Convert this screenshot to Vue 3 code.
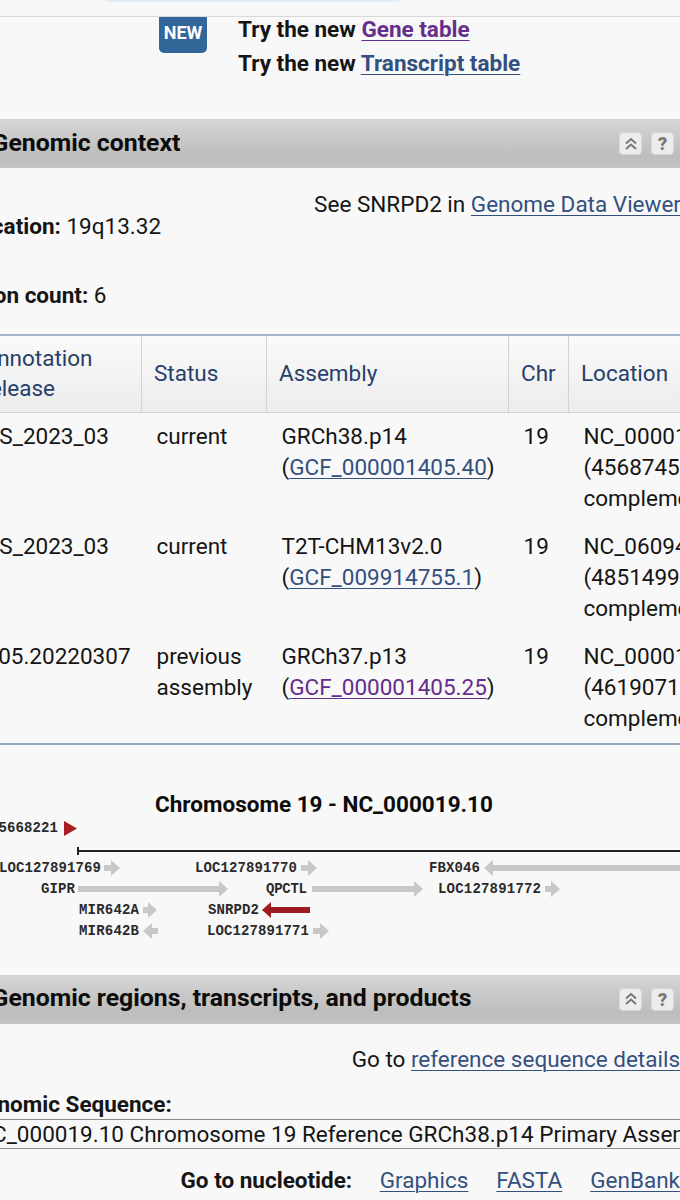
<script setup>
const rows = [
  { rel: 'RS_2023_03', status: ['current'], asm: 'GRCh38.p14', gcf: 'GCF_000001405.40', seen: false, loc: 'NC_000019.10', range: '(45687454..45692150,' },
  { rel: 'RS_2023_03', status: ['current'], asm: 'T2T-CHM13v2.0', gcf: 'GCF_009914755.1', seen: false, loc: 'NC_060943.1', range: '(48514999..48519700,' },
  { rel: '105.20220307', status: ['previous', 'assembly'], asm: 'GRCh37.p13', gcf: 'GCF_000001405.25', seen: true, loc: 'NC_000019.9', range: '(46190712..46195400,' }
]

// page coordinates minus the top of the map (y - 815)
const labels = [
  { t: '45668221', x: -10, w: 68, y: 13 },
  { t: 'LOC127891769', x: -1, w: 102, y: 53 },
  { t: 'LOC127891770', x: 195, w: 102, y: 53 },
  { t: 'FBX046', x: 429, w: 51, y: 53 },
  { t: 'GIPR', x: 41, w: 34, y: 74 },
  { t: 'QPCTL', x: 266, w: 41, y: 74 },
  { t: 'LOC127891772', x: 438, w: 103, y: 74 },
  { t: 'MIR642A', x: 79, w: 60, y: 95 },
  { t: 'SNRPD2', x: 208, w: 51, y: 95 },
  { t: 'MIR642B', x: 79, w: 60, y: 116 },
  { t: 'LOC127891771', x: 207, w: 102, y: 116 }
]

const arrows = [
  { from: 104, to: 120, y: 53 },
  { from: 301, to: 317, y: 53 },
  { from: 680, to: 484, y: 53 },
  { from: 78, to: 228, y: 74 },
  { from: 312, to: 423, y: 74 },
  { from: 545, to: 560, y: 74 },
  { from: 143, to: 157, y: 95 },
  { from: 310, to: 262, y: 95, red: true },
  { from: 158, to: 143, y: 116 },
  { from: 313, to: 329, y: 116 }
]

function arrowPath(a) {
  const dir = a.to > a.from ? 1 : -1
  const neck = a.to - dir * 9
  return `M${a.from} ${a.y - 3}H${neck}V${a.y - 8}L${a.to} ${a.y}L${neck} ${a.y + 8}V${a.y + 3}H${a.from}Z`
}
</script>

<template>
  <div class="page">
    <div class="searchEdge"></div>
    <div class="topRule"></div>

    <div class="notice">
      <div class="newBadge">NEW</div>
      <div class="noticeText">
        <p>Try the new <a class="seen" href="#">Gene table</a></p>
        <p>Try the new <a href="#">Transcript table</a></p>
      </div>
    </div>

    <div class="band">
      <h2>Genomic context</h2>
      <div class="bandBtns">
        <span class="bandBtn">
          <svg width="14" height="14" viewBox="0 0 14 14"><path d="M2 6.5L7 2L12 6.5M2 12L7 7.5L12 12" fill="none" stroke="#777" stroke-width="2"/></svg>
        </span>
        <span class="bandBtn qmark">?</span>
      </div>
    </div>

    <div class="contextInfo">
      <p class="seeAlso">See SNRPD2 in <a href="#">Genome Data Viewer</a></p>
      <p class="loc"><b>Location:</b> 19q13.32</p>
      <p class="exons"><b>Exon count:</b> 6</p>
    </div>

    <table class="asmTable">
      <colgroup>
        <col style="width: 171px" />
        <col style="width: 125px" />
        <col style="width: 242px" />
        <col style="width: 60px" />
        <col style="width: 112px" />
      </colgroup>
      <thead>
        <tr>
          <th>Annotation<br />release</th>
          <th>Status</th>
          <th>Assembly</th>
          <th>Chr</th>
          <th>Location</th>
        </tr>
      </thead>
      <tbody>
        <tr v-for="r in rows" :key="r.gcf">
          <td>{{ r.rel }}</td>
          <td><div v-for="s in r.status" :key="s">{{ s }}</div></td>
          <td>
            <div>{{ r.asm }}</div>
            <div>(<a :class="{ seen: r.seen }" href="#">{{ r.gcf }}</a>)</div>
          </td>
          <td>19</td>
          <td>
            <div>{{ r.loc }}</div>
            <div>{{ r.range }}</div>
            <div>complement)</div>
          </td>
        </tr>
      </tbody>
    </table>

    <h3 class="mapTitle">Chromosome 19 - NC_000019.10</h3>

    <svg class="map" width="680" height="128" viewBox="0 0 680 128">
      <path d="M64 6L77 13.5L64 21Z" fill="#a81c22" />
      <path d="M78 36H680" stroke="#222" stroke-width="2" />
      <path d="M78 32V40" stroke="#222" stroke-width="2" />
      <path v-for="a in arrows" :key="a.from + '-' + a.y" :d="arrowPath(a)" :fill="a.red ? '#9c1c20' : '#c8c8c8'" />
      <text
        v-for="l in labels"
        :key="l.t"
        class="mapLabel"
        :x="l.x"
        :y="l.y + 4"
        :textLength="l.w"
        lengthAdjust="spacing"
      >{{ l.t }}</text>
    </svg>

    <div class="band second">
      <h2>Genomic regions, transcripts, and products</h2>
      <div class="bandBtns">
        <span class="bandBtn">
          <svg width="14" height="14" viewBox="0 0 14 14"><path d="M2 6.5L7 2L12 6.5M2 12L7 7.5L12 12" fill="none" stroke="#777" stroke-width="2"/></svg>
        </span>
        <span class="bandBtn qmark">?</span>
      </div>
    </div>

    <p class="refLink">Go to <a href="#">reference sequence details</a></p>
    <p class="seqHead"><b>Genomic Sequence:</b></p>
    <div class="seqBox">NC_000019.10 Chromosome 19 Reference GRCh38.p14 Primary Assembly</div>
    <div class="goTo">
      <b>Go to nucleotide:</b>
      <a href="#">Graphics</a>
      <a href="#">FASTA</a>
      <a href="#">GenBank</a>
    </div>
  </div>
</template>

<style>
body {
  background: #f8f8f8;
}
</style>

<style scoped>
.page {
  position: relative;
  width: 680px;
  height: 1200px;
  overflow: hidden;
  background: #f8f8f8;
  color: #151515;
  font-family: Roboto, "Liberation Sans", sans-serif;
  font-size: 22.5px;
  line-height: 31px;
}

p {
  margin: 0;
}

a {
  color: #33507f;
  text-decoration: underline;
  text-decoration-thickness: 1px;
  text-underline-offset: 3px;
}

a.seen {
  color: #652d8c;
}

.searchEdge {
  height: 2px;
  margin: 0 280px 0 105px;
  background: #e3edf6;
  border-radius: 0 0 8px 8px;
}

.topRule {
  height: 1px;
  margin-top: 14px;
  background: #d9d9d9;
}

.notice {
  display: flex;
  gap: 31px;
  height: 102px;
  padding-left: 159px;
}

.newBadge {
  width: 48px;
  height: 36px;
  background: #336699;
  border-radius: 0 0 5px 5px;
  color: #fff;
  font-size: 18px;
  font-weight: 700;
  line-height: 32px;
  text-align: center;
}

.noticeText {
  margin-top: -5px;
  font-weight: 700;
  line-height: 34px;
}

.band {
  display: flex;
  align-items: center;
  justify-content: space-between;
  height: 49px;
  padding-right: 6px;
  background: linear-gradient(#d6d6d6, #bdbdbd 75%, #c4c4c4);
}

.band h2 {
  margin: -3px 0 0 -8.5px;
  color: #0c0c0c;
  font-size: 24.8px;
  font-weight: 700;
  white-space: nowrap;
}

.bandBtns {
  display: flex;
  gap: 9px;
}

.bandBtn {
  display: flex;
  align-items: center;
  justify-content: center;
  width: 23px;
  height: 23px;
  background: #ececec;
  border: 1px solid #d8d8d8;
  border-radius: 4px;
  box-sizing: border-box;
}

.qmark {
  color: #777;
  font-size: 18px;
  font-weight: 900;
}

.contextInfo {
  height: 166px;
}

.seeAlso {
  padding-top: 21px;
  margin-right: -1px;
  text-align: right;
  white-space: nowrap;
}

.loc {
  margin-top: -9px;
  margin-left: -33px;
}

.exons {
  margin-top: 38px;
  margin-left: -30px;
}

.asmTable {
  width: 710px;
  margin-left: -30px;
  table-layout: fixed;
  border-collapse: collapse;
  border-bottom: 2px solid #8fa3bb;
}

.asmTable th {
  height: 77px;
  padding: 0 0 2px 12.5px;
  background: linear-gradient(#fafafa, #ececec);
  border-top: 2px solid #a2b5ca;
  border-bottom: 1px solid #d2d2d2;
  border-left: 1px solid #d2d2d2;
  box-sizing: border-box;
  color: #26406a;
  font-weight: 400;
  line-height: 30px;
  text-align: left;
  white-space: nowrap;
  overflow: hidden;
}

.asmTable th:first-child {
  border-left: none;
}

.asmTable td {
  height: 110px;
  padding: 8px 0 9px 15.5px;
  box-sizing: border-box;
  line-height: 31px;
  vertical-align: top;
  white-space: nowrap;
  overflow: hidden;
}

.asmTable td:last-child {
  border-right: 1px solid #c8c8c8;
}

.asmTable tr:last-child td {
  height: 109px;
}

.mapTitle {
  margin: 44px 0 0 -32px;
  height: 26px;
  color: #0c0c0c;
  font-size: 22.5px;
  font-weight: 700;
  text-align: center;
}

.map {
  display: block;
  margin-top: 0;
}

.mapLabel {
  fill: #2a2a2a;
  font-family: "Liberation Mono", monospace;
  font-size: 14px;
  font-weight: 700;
}

.band.second {
  margin-top: 32px;
}

.refLink {
  margin-top: 20px;
  text-align: right;
  white-space: nowrap;
}

.seqHead {
  margin: 14px 0 0 -30px;
}

.seqBox {
  height: 30px;
  margin-top: -1px;
  margin-left: -24px;
  border-top: 1px solid #8c8c8c;
  border-bottom: 1px solid #8c8c8c;
  box-sizing: border-box;
  line-height: 29px;
  white-space: nowrap;
}

.goTo {
  display: flex;
  margin-top: 16px;
  padding-left: 180.5px;
  white-space: nowrap;
}

.goTo a {
  margin-left: 28px;
}

.goTo b + a {
  margin-left: 27.5px;
}
</style>
